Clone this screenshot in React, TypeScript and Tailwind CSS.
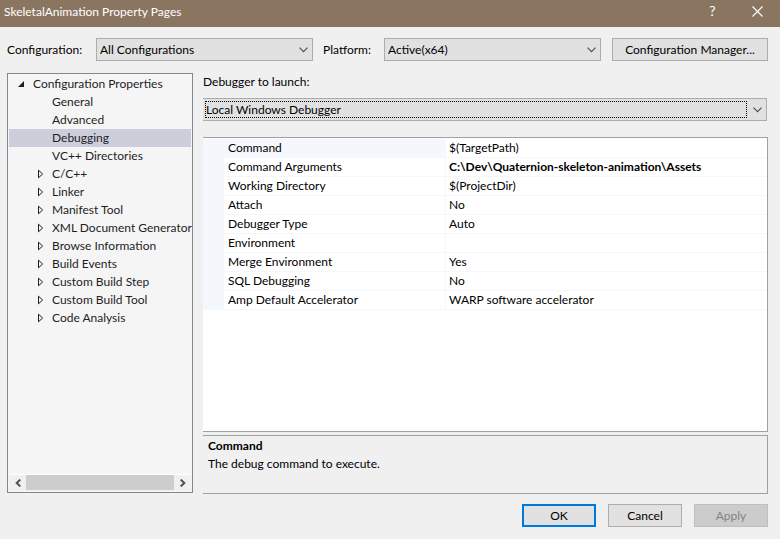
import { useState } from "react";
import type { ComponentProps } from "react";
import clsx from "clsx";

type TreeItem = { label: string; expandable?: boolean };
type Property = { name: string; value: string; bold?: boolean };

const TREE: TreeItem[] = [
  { label: "General" },
  { label: "Advanced" },
  { label: "Debugging" },
  { label: "VC++ Directories" },
  { label: "C/C++", expandable: true },
  { label: "Linker", expandable: true },
  { label: "Manifest Tool", expandable: true },
  { label: "XML Document Generator", expandable: true },
  { label: "Browse Information", expandable: true },
  { label: "Build Events", expandable: true },
  { label: "Custom Build Step", expandable: true },
  { label: "Custom Build Tool", expandable: true },
  { label: "Code Analysis", expandable: true },
];

const PROPERTIES: Property[] = [
  { name: "Command", value: "$(TargetPath)" },
  { name: "Command Arguments", value: "C:\\Dev\\Quaternion-skeleton-animation\\Assets", bold: true },
  { name: "Working Directory", value: "$(ProjectDir)" },
  { name: "Attach", value: "No" },
  { name: "Debugger Type", value: "Auto" },
  { name: "Environment", value: "" },
  { name: "Merge Environment", value: "Yes" },
  { name: "SQL Debugging", value: "No" },
  { name: "Amp Default Accelerator", value: "WARP software accelerator" },
];

function Select({ id, options, focused }: { id: string; options: string[]; focused?: boolean }) {
  return (
    <div
      className={clsx(
        "relative h-[23px] min-w-0 flex-1 border-[#adadad] bg-[#e1e1e1]",
        focused ? "border-y border-r" : "border",
      )}
    >
      <select
        id={id}
        className="block h-full w-full appearance-none bg-transparent pt-px pl-[3px] outline-none"
      >
        {options.map((option) => (
          <option key={option}>{option}</option>
        ))}
      </select>
      {/* Dotted focus rectangle */}
      {focused && (
        <div className="pointer-events-none absolute top-0.5 right-[19px] bottom-0.5 left-0.5 border border-dotted border-black" />
      )}
      <svg
        className="pointer-events-none absolute top-2 right-1 h-[6px] w-[9px]"
        viewBox="0 0 9 6"
        fill="none"
        stroke="#505050"
        strokeWidth="1.2"
      >
        <path d="M0.5 0.7 4.5 4.7 8.5 0.7" />
      </svg>
    </div>
  );
}

function Button({ className, primary, ...props }: ComponentProps<"button"> & { primary?: boolean }) {
  return (
    <button
      type="button"
      className={clsx(
        "h-[23px] shrink-0 bg-[#e1e1e1] disabled:border-[#bfbfbf] disabled:bg-[#cccccc] disabled:text-[#838383]",
        primary ? "border-2 border-[#0078d7]" : "border border-[#adadad]",
        className,
      )}
      {...props}
    />
  );
}

function ScrollArrow({ direction }: { direction: "left" | "right" }) {
  return (
    <button type="button" aria-label={`Scroll ${direction}`} className="flex w-[17px] items-center justify-center">
      <svg width="6" height="8" viewBox="0 0 6 8" fill="none" stroke="#505050" strokeWidth="2">
        <path d={direction === "left" ? "M5.3 0.6 1.7 4 5.3 7.4" : "M0.7 0.6 4.3 4 0.7 7.4"} />
      </svg>
    </button>
  );
}

function PropertyTree() {
  const [selected, setSelected] = useState("Debugging");

  return (
    <nav className="mb-px flex w-[186px] shrink-0 flex-col border border-[#828790] bg-[#f5f5f5] p-px text-[#1e1e1e]">
      <button type="button" className="flex h-[18px] items-center text-left">
        <span className="flex w-6 pl-[9px]">
          <svg width="6" height="6" viewBox="0 0 6 6" fill="#1e1e1e">
            <path d="M6 0V6H0Z" />
          </svg>
        </span>
        Configuration Properties
      </button>
      <ul className="flex-1">
        {TREE.map((item) => (
          <li key={item.label}>
            <button
              type="button"
              onClick={() => setSelected(item.label)}
              className={clsx(
                "flex h-[18px] w-full items-center text-left whitespace-nowrap",
                selected === item.label && "bg-[#cccedb]",
              )}
            >
              <span className="flex w-[43px] shrink-0 pl-[29px]">
                {item.expandable && (
                  <svg width="6" height="10" viewBox="0 0 6 10" fill="none" stroke="#1e1e1e">
                    <path d="M0.5 1.2V8.8L4.6 5Z" />
                  </svg>
                )}
              </span>
              {item.label}
            </button>
          </li>
        ))}
      </ul>
      <div className="flex h-[17px] border-t border-white bg-[#f0f0f0] pb-px">
        <ScrollArrow direction="left" />
        <div className="flex-1 bg-[#cdcdcd]" />
        <ScrollArrow direction="right" />
      </div>
    </nav>
  );
}

function PropertyGrid() {
  return (
    <div className="flex-1 border-y border-r border-[#a0a0a0] bg-white pt-px">
      <table className="w-full table-fixed border-separate border-spacing-0 text-left">
        <colgroup>
          <col className="w-[21px]" />
          <col className="w-[222px]" />
          <col />
        </colgroup>
        <tbody>
          {PROPERTIES.map((property, i) => (
            <tr key={property.name} className="h-[19px]">
              <td className="bg-[#f4f7fc] p-0" />
              <th
                scope="row"
                className={clsx("border-r border-b border-[#f4f7fc] py-0 pl-1 font-normal", i === 0 && "bg-[#f4f7fc]")}
              >
                {property.name}
              </th>
              <td className={clsx("border-b border-[#f4f7fc] py-0 pl-[3px]", property.bold && "font-bold")}>
                {property.value}
              </td>
            </tr>
          ))}
        </tbody>
      </table>
    </div>
  );
}

export default function App() {
  return (
    <div className="flex min-h-screen flex-col bg-[#f0f0f0] font-['Lato','Open_Sans',sans-serif] text-[12px] leading-[18px] text-black">
      <header className="flex h-[27px] items-center bg-[#8a7561] pl-1 text-white">
        <h1 className="flex-1 pb-[3px]">SkeletalAnimation Property Pages</h1>
        <button type="button" aria-label="Help" className="flex h-full w-[45px] items-center justify-center pb-[5px] text-[14px]">
          ?
        </button>
        <button type="button" aria-label="Close" className="flex h-full w-[45px] items-center justify-center pb-[5px]">
          <svg width="11" height="11" viewBox="0 0 11 11" stroke="currentColor" strokeWidth="1.1">
            <path d="M0.5 0.5 10.5 10.5M10.5 0.5 0.5 10.5" />
          </svg>
        </button>
      </header>

      <div className="flex items-center pt-[11px] pr-3 pl-[7px]">
        <label htmlFor="configuration" className="w-[89px]">
          Configuration:
        </label>
        <Select id="configuration" options={["All Configurations", "Debug", "Release"]} />
        <label htmlFor="platform" className="w-[71px] pl-[10px]">
          Platform:
        </label>
        <Select id="platform" options={["Active(x64)", "Win32", "x64"]} />
        <Button className="ml-[11px] w-[156px]">Configuration Manager...</Button>
      </div>

      <main className="flex flex-1 gap-[10px] pt-3 pr-3 pl-[7px]">
        <PropertyTree />
        <div className="flex min-w-0 flex-1 flex-col">
          <label htmlFor="debugger" className="mb-[7px]">
            Debugger to launch:
          </label>
          <div className="mr-px mb-4 flex">
            <Select id="debugger" options={["Local Windows Debugger", "Remote Windows Debugger"]} focused />
          </div>
          <PropertyGrid />
          <section className="mt-[3px] h-[59px] border-y border-r border-[#a0a0a0] px-[5px] pt-px">
            <h2 className="font-bold">Command</h2>
            <p>The debug command to execute.</p>
          </section>
        </div>
      </main>

      <footer className="flex justify-end gap-3 pt-[10px] pr-3 pb-3">
        <Button className="w-[74px]" primary>
          OK
        </Button>
        <Button className="w-[74px]">Cancel</Button>
        <Button className="w-[74px]" disabled>
          Apply
        </Button>
      </footer>
    </div>
  );
}
